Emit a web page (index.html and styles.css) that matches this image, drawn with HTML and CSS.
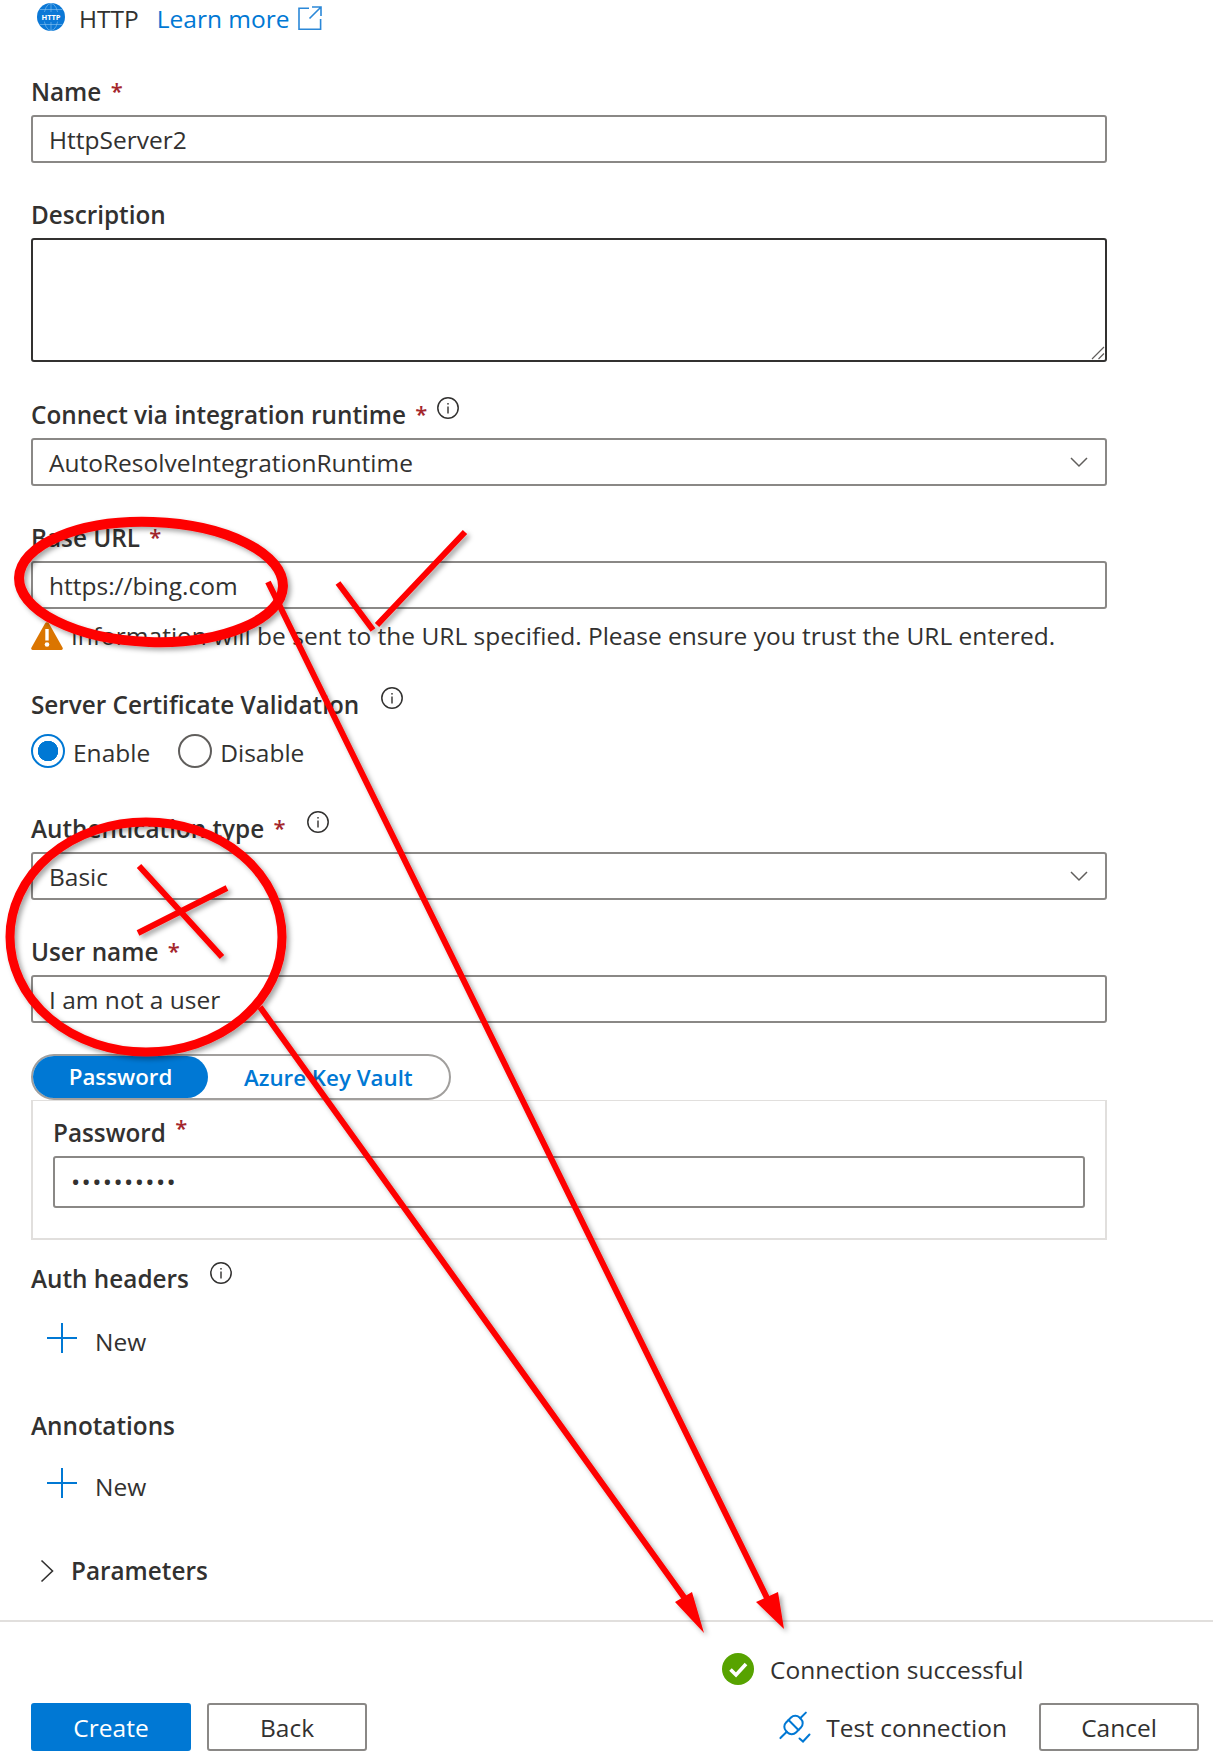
FILE: index.html
```html
<!DOCTYPE html>
<html lang="en">
<head>
<meta charset="utf-8">
<title>New linked service (HTTP)</title>
<link rel="stylesheet" href="styles.css">
</head>
<body>
<svg class="sprites" width="0" height="0" aria-hidden="true">
  <symbol id="info" viewBox="0 0 22 22">
    <circle cx="11" cy="11" r="10.2" fill="none" stroke="#323130" stroke-width="1.5"/>
    <rect x="10.3" y="9.5" width="1.4" height="7" fill="#323130"/>
    <rect x="10.3" y="6" width="1.4" height="1.6" fill="#323130"/>
  </symbol>
  <symbol id="chev-down" viewBox="0 0 18 11">
    <path d="M1 1l8 8 8-8" fill="none" stroke="#605e5c" stroke-width="1.5"/>
  </symbol>
  <symbol id="plus" viewBox="0 0 30 30">
    <path d="M15 0v30M0 15h30" fill="none" stroke="#0078d4" stroke-width="2"/>
  </symbol>
</svg>

<div class="page">
  <main class="form">
    <header class="type-row">
      <svg class="globe" viewBox="0 0 28 28" aria-hidden="true">
        <circle cx="14" cy="14" r="14" fill="#0b78d6"/>
        <g fill="none" stroke="#8cc4f0" stroke-width=".6">
          <ellipse cx="14" cy="14" rx="7" ry="13.6"/>
          <path d="M14 0v9M14 19v9M2.5 6.5h23M2.5 21.5h23"/>
        </g>
        <rect x="2" y="9" width="24" height="9.6" fill="#0b78d6"/>
        <text x="14" y="16.6" class="globe-text">HTTP</text>
      </svg>
      <span class="type-name">HTTP</span>
      <a class="link" href="#">Learn more</a>
      <svg class="ext" viewBox="0 0 24 24" aria-hidden="true">
        <path d="M11 2.2H1v21h21.6V13M14 1h9v9M23 1L11.5 12.5" fill="none" stroke="#2b88d8" stroke-width="1.6"/>
      </svg>
    </header>

    <section class="field">
      <label class="label">Name <span class="req">*</span></label>
      <div class="control">HttpServer2</div>
    </section>

    <section class="field">
      <label class="label">Description</label>
      <div class="control control-area">
        <svg class="grip" viewBox="0 0 14 14" aria-hidden="true"><path d="M1 13L13 1M7.500 13L13 7.500" fill="none" stroke="#605e5c" stroke-width="1.200"/></svg>
      </div>
    </section>

    <section class="field field-connect">
      <label class="label">Connect via integration runtime <span class="req">*</span><svg class="info info-connect"><use href="#info"/></svg></label>
      <div class="control control-select">AutoResolveIntegrationRuntime<svg class="chev"><use href="#chev-down"/></svg></div>
    </section>

    <section class="field">
      <label class="label">Base URL <span class="req">*</span></label>
      <div class="control">https://bing.com</div>
    </section>

    <div class="warning">
      <svg class="warn-icon" viewBox="0 0 32 28" aria-hidden="true">
        <path d="M14 1.500a2.300 2.300 0 0 1 4 0l13.500 24a1.600 1.600 0 0 1-1.400 2.500H1.900a1.600 1.600 0 0 1-1.400-2.500z" fill="#db7500"/>
        <rect x="14.300" y="7" width="3.400" height="11.500" fill="#fff"/>
        <circle cx="16" cy="22.500" r="2.300" fill="#fff"/>
      </svg>
      <span>Information will be sent to the URL specified. Please ensure you trust the URL entered.</span>
    </div>

    <section class="field field-cert">
      <label class="label">Server Certificate Validation<svg class="info info-cert"><use href="#info"/></svg></label>
      <div class="radios">
        <span class="radio-item"><span class="radio radio-on"></span>Enable</span>
        <span class="radio-item"><span class="radio"></span>Disable</span>
      </div>
    </section>

    <section class="field field-auth">
      <label class="label">Authentication type <span class="req">*</span><svg class="info info-auth"><use href="#info"/></svg></label>
      <div class="control control-select">Basic<svg class="chev"><use href="#chev-down"/></svg></div>
    </section>

    <section class="field">
      <label class="label">User name <span class="req">*</span></label>
      <div class="control">I am not a user</div>
    </section>

    <div class="toggle">
      <span class="toggle-on">Password</span>
      <span class="toggle-off">Azure Key Vault</span>
    </div>
    <section class="secret">
      <label class="label">Password <span class="req req-up">*</span></label>
      <div class="control control-pass">••••••••••</div>
    </section>

    <section class="group group-headers">
      <h2 class="label">Auth headers<svg class="info info-headers"><use href="#info"/></svg></h2>
      <div class="add"><svg class="plus"><use href="#plus"/></svg>New</div>
    </section>

    <section class="group group-notes">
      <h2 class="label">Annotations</h2>
      <div class="add"><svg class="plus"><use href="#plus"/></svg>New</div>
    </section>

    <div class="expander">
      <svg class="chev-right" viewBox="0 0 15 24" aria-hidden="true"><path d="M1.500 1.500l11 10.500-11 10.500" fill="none" stroke="#323130" stroke-width="1.600"/></svg>
      <span class="label">Parameters</span>
    </div>
  </main>

  <footer class="footer">
    <div class="actions">
      <button class="btn btn-primary">Create</button>
      <button class="btn">Back</button>
    </div>
    <div class="actions-right">
      <div class="status">
        <svg class="ok" viewBox="0 0 32 32" aria-hidden="true">
          <circle cx="16" cy="16" r="16" fill="#57a300"/>
          <path d="M8.500 16.500l5.500 5.500L24 11" fill="none" stroke="#fff" stroke-width="3.600"/>
        </svg>
        <span>Connection successful</span>
      </div>
      <div class="actions actions-end">
        <span class="test">
          <svg class="plug" viewBox="0 0 32 32" aria-hidden="true">
            <g fill="none" stroke="#0078d4" stroke-width="2" stroke-linecap="round">
              <g transform="rotate(-45 14.500 14)">
                <path d="M-4 14h9M24 14h8"/>
                <rect x="5" y="7" width="19" height="14" rx="6"/>
                <path d="M14.500 7v14"/>
              </g>
              <path d="M20.500 27.500l3.500 3 6.500-7"/>
            </g>
          </svg>
          Test connection
        </span>
        <button class="btn">Cancel</button>
      </div>
    </div>
  </footer>

  <svg class="markup" viewBox="0 0 1213 1763" aria-hidden="true">
    <defs>
      <filter id="shadow" x="-10%" y="-10%" width="120%" height="120%">
        <feDropShadow dx="3" dy="3" stdDeviation="2.500" flood-color="#000" flood-opacity=".35"/>
      </filter>
    </defs>
    <g filter="url(#shadow)" fill="none" stroke="#fe0000" stroke-linecap="butt">
      <ellipse cx="151" cy="582" rx="132" ry="60" stroke-width="10" transform="rotate(2 151 582)"/>
      <ellipse cx="146" cy="937" rx="136" ry="115" stroke-width="9"/>
      <path d="M338 583L373 630M377 625L465 532" stroke-width="6"/>
      <path d="M139 866L222 957M138 933L227 888" stroke-width="6"/>
      <path d="M268 582L768 1600M260 1007L686 1600" stroke-width="6"/>
      <path d="M756 1602L778 1592L784 1629zM675 1602L692 1592L704 1633z" fill="#fe0000" stroke="none"/>
    </g>
  </svg>
</div>
</body>
</html>
```
FILE: styles.css
```css
* { box-sizing: border-box; }
html, body { margin: 0; padding: 0; background: #fff; }
body {
  font-family: "Open Sans", "Noto Sans", sans-serif;
  font-size: 24.5px;
  color: #323130;
}
.sprites { position: absolute; }
.page { position: relative; width: 1213px; height: 1763px; overflow: hidden; }
.form { padding: 0 106px 0 31px; }

.type-row { display: flex; align-items: center; height: 36px; margin-bottom: 41px; }
.globe { width: 28px; height: 28px; margin: -2px 0 0 6px; }
.globe-text { font: 700 7.500px "Open Sans", sans-serif; fill: #fff; text-anchor: middle; }
.type-name { margin-left: 14px; }
.link { margin-left: 18px; color: #0078d4; text-decoration: none; }
.ext { width: 24px; height: 24px; margin: -1px 0 0 8px; }

.field { margin-top: 37px; }
.field-connect { margin-top: 38px; }
.field-cert { margin-top: 41px; }
.field-auth { margin-top: 46px; }

.label {
  display: block;
  margin: 0 0 8px;
  height: 30px;
  line-height: 30px;
  font-size: 24.3px;
  font-weight: 600;
  position: relative;
}
.req { color: #a4262c; font-size: 22px; font-weight: 600; margin-left: 3px; position: relative; top: -2px; }
.req-up { top: -6px; }

.control {
  position: relative;
  height: 48px;
  line-height: 41px;
  padding: 2px 16px 0;
  border: 2px solid #8a8886;
  border-radius: 3px;
}
.control-area { height: 124px; border-color: #323130; }
.grip { position: absolute; right: 0; bottom: 0; width: 14px; height: 14px; }
.chev { position: absolute; right: 17px; top: 17px; width: 18px; height: 11px; }
.info { width: 22px; height: 22px; position: absolute; }
.info-connect { left: 406px; top: -3px; }
.info-cert { left: 350px; top: -3px; }
.info-auth { left: 276px; top: -3px; }
.info-headers { left: 179px; top: -2px; }

.warning { display: flex; align-items: center; height: 28px; margin-top: 12px; gap: 8px; }
.warn-icon { width: 32px; height: 28px; flex: none; margin-top: 2px; }

.radios { display: flex; align-items: center; height: 33px; margin-top: 15px; gap: 28px; }
.radio-item { display: flex; align-items: center; gap: 8px; padding-top: 1px; }
.radio { width: 34px; height: 34px; border: 2px solid #605e5c; border-radius: 50%; flex: none; margin-top: -2px; }
.radio-on { border-color: #0078d4; background: radial-gradient(circle, #0078d4 0 10px, #fff 10.500px); }

.toggle {
  display: flex;
  align-items: center;
  width: 420px;
  height: 46px;
  margin-top: 31px;
  border: 2px solid #a19f9d;
  border-radius: 23px;
  color: #0078d4;
  font-size: 22.3px;
  font-weight: 600;
}
.toggle-on {
  width: 175px;
  height: 42px;
  line-height: 42px;
  text-align: center;
  background: #0078d4;
  color: #fff;
  border-radius: 21px;
}
.toggle-off { margin-left: 36px; }

.secret { border: 2px solid #e1dfdd; padding: 17px 20px 30px; border-top-width: 1px; }
.control-pass { height: 52px; line-height: 44px; letter-spacing: 1.4px; }

.group-headers { margin-top: 24px; }
.group-notes { margin-top: 50px; }
.add { display: flex; align-items: center; height: 40px; padding-left: 16px; gap: 18px; }
.group .label { margin-bottom: 0; }
.group-headers .add { margin-top: 27px; }
.group-notes .add { margin-top: 25px; }
.plus { width: 30px; height: 30px; margin-top: -6px; }

.expander { display: flex; align-items: center; margin-top: 50px; padding-left: 9px; gap: 16px; height: 30px; }
.expander .label { margin: 0; }
.chev-right { width: 15px; height: 24px; }

.footer {
  position: absolute;
  left: 0; right: 0; top: 1620px;
  height: 143px;
  border-top: 2px solid #e1dfdd;
  padding: 0 14px 12px 31px;
  display: flex;
  align-items: flex-end;
  justify-content: space-between;
}
.actions { display: flex; gap: 16px; }
.actions-right { width: 477px; }
.actions-end { justify-content: flex-end; align-items: center; }
.status { display: flex; align-items: center; height: 34px; gap: 16px; margin-bottom: 17px; }
.ok { width: 32px; height: 32px; }
.test { display: flex; align-items: center; gap: 15px; margin-right: 16px; }
.plug { width: 32px; height: 32px; overflow: visible; }
.btn {
  width: 160px;
  height: 48px;
  background: #fff;
  color: #323130;
  border: 2px solid #8a8886;
  border-radius: 3px;
  font: inherit;
  padding: 0;
}
.btn-primary { background: #0078d4; border-color: #0078d4; color: #fff; }

.markup { position: absolute; left: 0; top: 0; width: 1213px; height: 1763px; pointer-events: none; }
```
